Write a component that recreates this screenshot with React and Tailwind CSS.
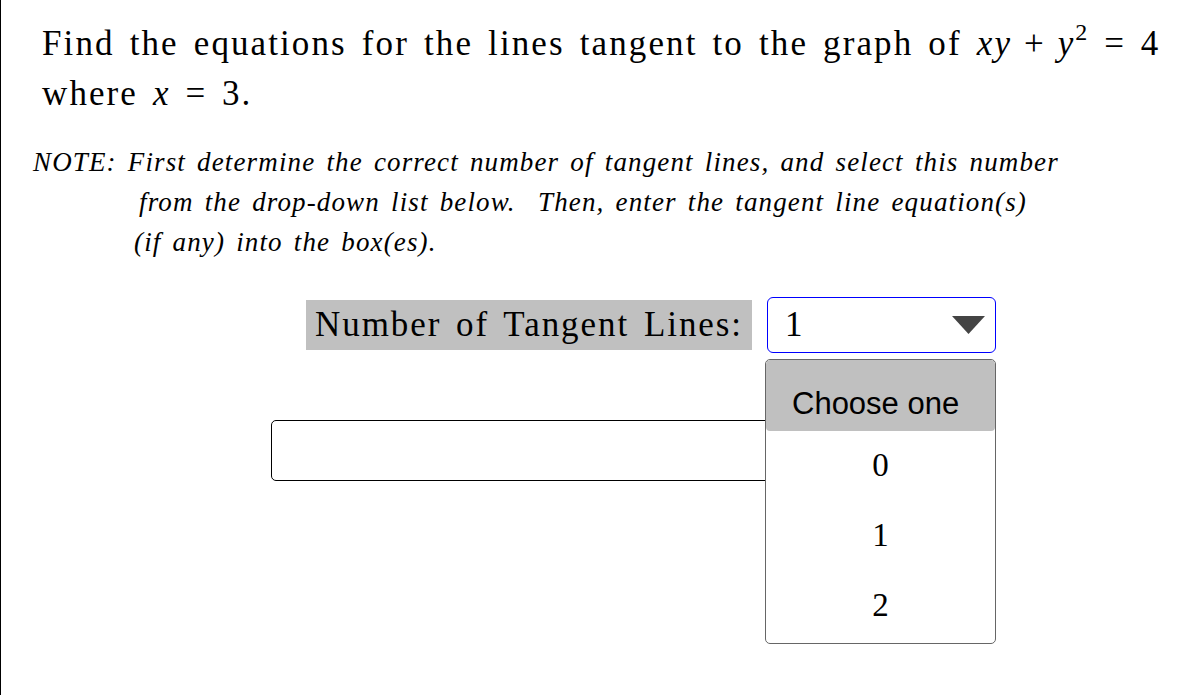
import React from "react";

export default function App() {
  return (
    <div className="relative w-[1194px] h-[695px] overflow-hidden bg-white border-l-[1.5px] border-black text-black font-['Liberation_Serif',serif]">
      <p className="pl-[41px] pt-[19px] text-[35px] leading-[50px] tracking-[0.06em] [word-spacing:0.12em] whitespace-nowrap">
        Find the equations for the lines tangent to the graph of{" "}
        <span className="italic">xy</span>
        <span className="mx-[0.34em]">+</span>
        <span className="italic">y</span>
        <span className="relative -top-[15px] text-[24px] leading-none">2</span>
        <span className="mx-[0.42em]">=</span>4
        <br />
        where <span className="italic">x</span>
        <span className="mx-[0.42em]">=</span>3.
      </p>
      <p className="mt-[23px] pl-[133px] -indent-[101px] italic text-[27px] leading-[40px] tracking-[0.042em] [word-spacing:0.12em] whitespace-nowrap">
        NOTE: First determine the correct number of tangent lines, and select this number
        <br />
        <span className="pl-[5px]">from the drop-down list below.&nbsp; Then, enter the tangent line equation(s)</span>
        <br />
        (if any) into the box(es).
      </p>
      <div className="mt-[35px] flex items-center">
        <div className="ml-[305px] w-[446px] h-[50px] pl-[9px] flex items-center bg-[#c0c0c0] text-[35px] tracking-[0.055em] [word-spacing:0.12em] whitespace-nowrap">
          Number of Tangent Lines:
        </div>
        <div className="ml-[15px] w-[229px] h-[56px] border-[1.5px] border-[#0000ff] rounded-[6px] flex items-center justify-between pl-[17px] pr-[10px]">
          <span className="text-[35px]">1</span>
          <svg width="33" height="18" viewBox="0 0 33 18">
            <polygon points="0,0 33,0 16.5,18" fill="#444" />
          </svg>
        </div>
      </div>
      <div className="mt-[67px] ml-[270px] w-[510px] h-[61px] border-[1.5px] border-black rounded-[5px]" />
      <div className="absolute left-[764px] top-[359px] w-[231px] h-[285px] border border-[#666] rounded-[5px] bg-white overflow-hidden">
        <div className="h-[71px] bg-[#c0c0c0] rounded-[4px] pt-[27px] pl-[26px] text-[31px] leading-[34px] font-['Liberation_Sans',Arial,sans-serif]">
          Choose one
        </div>
        <div className="h-[70px] flex items-center justify-center text-[33px]">0</div>
        <div className="h-[70px] flex items-center justify-center text-[33px]">1</div>
        <div className="h-[70px] flex items-center justify-center text-[33px]">2</div>
      </div>
    </div>
  );
}
